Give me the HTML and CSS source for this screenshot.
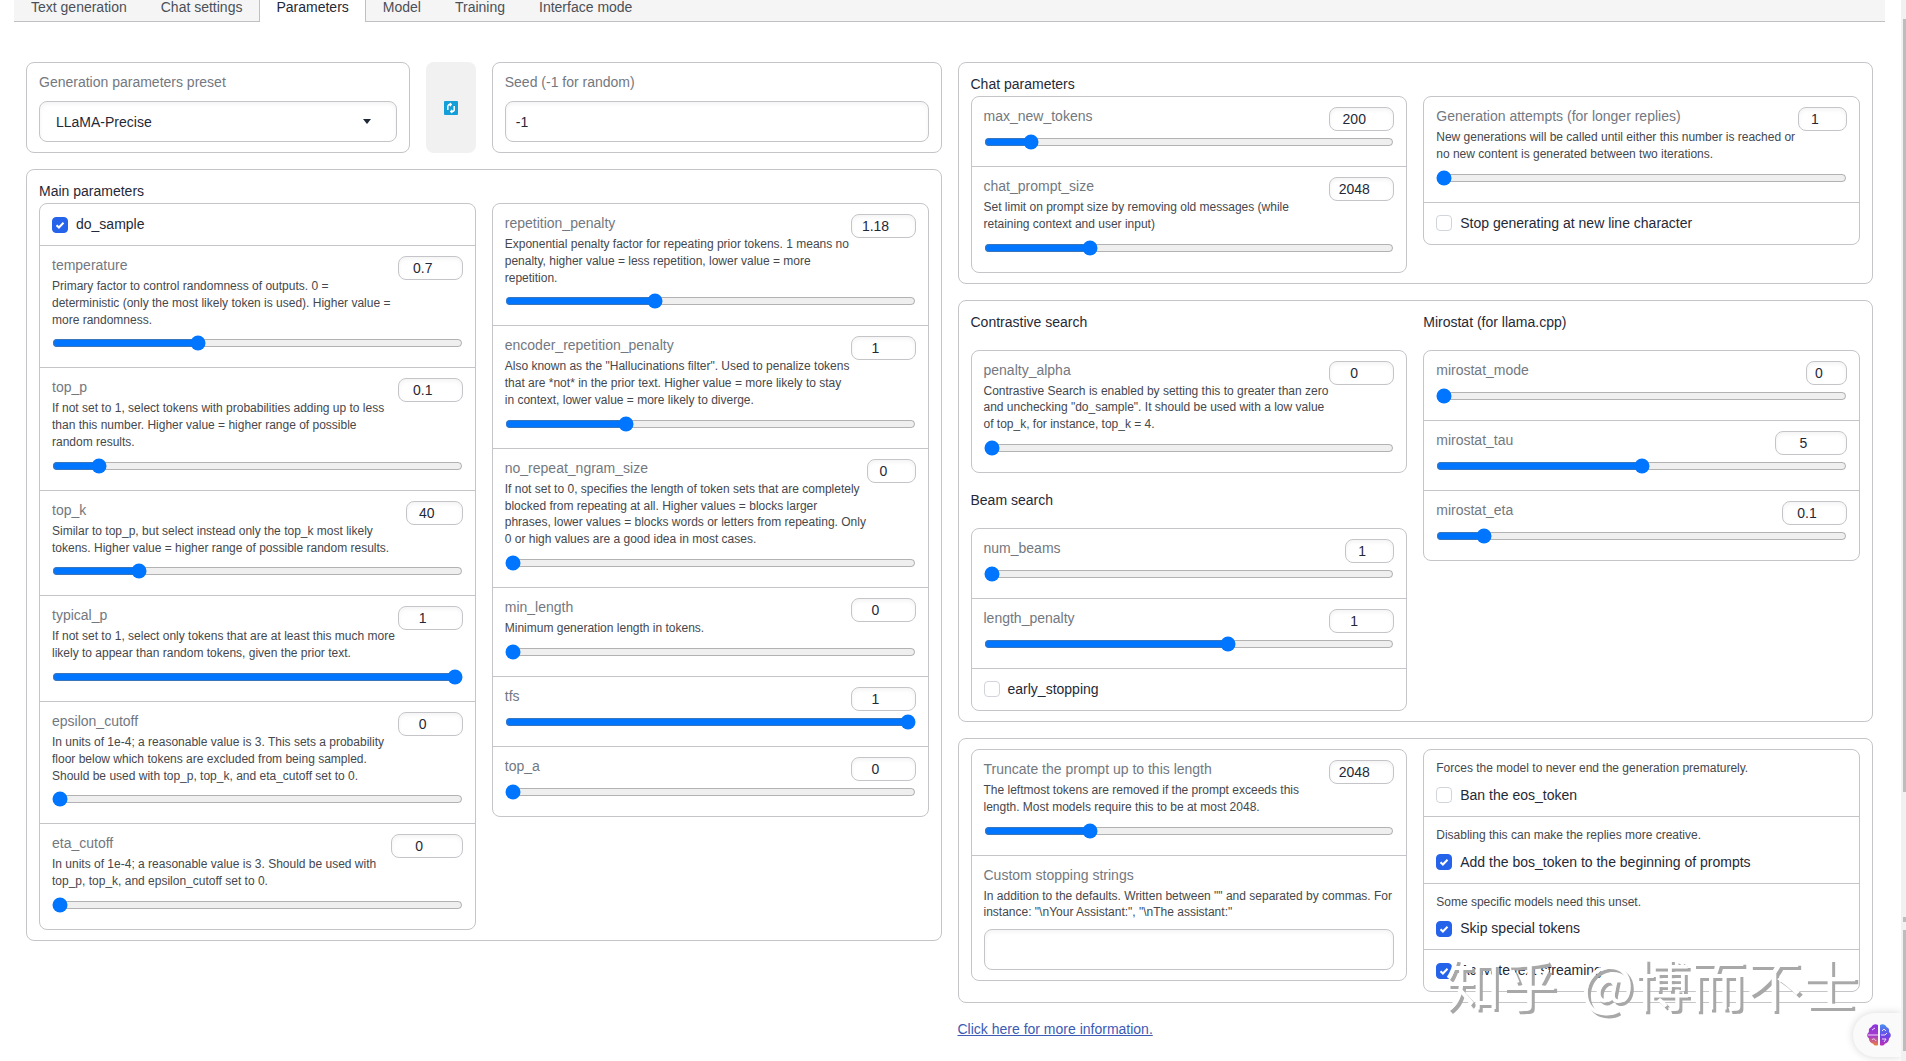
FILE: index.html
```html
<!DOCTYPE html>
<html lang="en">
<head>
<meta charset="utf-8">
<title>Parameters</title>
<link rel="stylesheet" href="styles.css">
</head>
<body>
<nav class="tabs">
  <button class="tab" type="button">Text generation</button>
  <button class="tab" type="button">Chat settings</button>
  <button class="tab selected" type="button">Parameters</button>
  <button class="tab" type="button">Model</button>
  <button class="tab" type="button">Training</button>
  <button class="tab" type="button">Interface mode</button>
</nav>

<main class="page">
  <div class="column">
    <div class="pair">
      <div class="preset-row">
        <div class="box block grow">
          <label class="label spaced" for="preset">Generation parameters preset</label>
          <div class="select-wrap">
            <select class="field select" id="preset"><option>LLaMA-Precise</option></select>
            <svg class="caret" width="8" height="5" viewBox="0 0 8 5" aria-hidden="true"><path d="M0 0h8L4 5z" fill="#1f2937"/></svg>
          </div>
        </div>
        <button class="refresh" type="button" aria-label="Refresh presets">
          <svg width="14" height="14" viewBox="0 0 14 14" aria-hidden="true">
            <rect width="14" height="14" rx="1" fill="#149fd8"/>
            <g transform="matrix(0 1 1 0 0 0)">
              <path d="M3.600 8V5.800a2 2 0 0 1 2-2H9M10.400 6v2.200a2 2 0 0 1-2 2H5" fill="none" stroke="#fff" stroke-width="1.500"/>
              <path d="M1.500 7L3.600 4.200 5.800 7zM12.500 7l-2.100 2.800L8.200 7z" fill="#fff"/>
            </g>
          </svg>
        </button>
      </div>
      <div class="box block">
        <label class="label spaced" for="seed">Seed (-1 for random)</label>
        <input class="field" id="seed" type="text" value="-1">
      </div>
    </div>

    <section class="box panel">
      <h2 class="heading">Main parameters</h2>
      <div class="pair">
        <div class="box group">
          <div class="block">
            <label class="check"><input type="checkbox" checked>do_sample</label>
          </div>
          <div class="block">
            <div class="head">
              <div class="text"><label class="label" for="temperature">temperature</label>
                <p class="info">Primary factor to control randomness of outputs. 0 = deterministic (only the most likely token is used). Higher value = more randomness.</p></div>
              <input class="number" id="temperature" type="number" step="any" value="0.7">
            </div>
            <input class="slider" type="range" aria-label="temperature" min="0.01" max="1.99" step="any" value="0.7">
          </div>
          <div class="block">
            <div class="head">
              <div class="text"><label class="label" for="top_p">top_p</label>
                <p class="info">If not set to 1, select tokens with probabilities adding up to less than this number. Higher value = higher range of possible random results.</p></div>
              <input class="number" id="top_p" type="number" step="any" value="0.1">
            </div>
            <input class="slider" type="range" aria-label="top_p" min="0" max="1" step="any" value="0.1">
          </div>
          <div class="block">
            <div class="head">
              <div class="text"><label class="label" for="top_k">top_k</label>
                <p class="info">Similar to top_p, but select instead only the top_k most likely tokens. Higher value = higher range of possible random results.</p></div>
              <input class="number digits-3" id="top_k" type="number" value="40">
            </div>
            <input class="slider" type="range" aria-label="top_k" min="0" max="200" value="40">
          </div>
          <div class="block">
            <div class="head">
              <div class="text"><label class="label" for="typical_p">typical_p</label>
                <p class="info">If not set to 1, select only tokens that are at least this much more likely to appear than random tokens, given the prior text.</p></div>
              <input class="number" id="typical_p" type="number" value="1">
            </div>
            <input class="slider" type="range" aria-label="typical_p" min="0" max="1" step="any" value="1">
          </div>
          <div class="block">
            <div class="head">
              <div class="text"><label class="label" for="epsilon_cutoff">epsilon_cutoff</label>
                <p class="info">In units of 1e-4; a reasonable value is 3. This sets a probability floor below which tokens are excluded from being sampled. Should be used with top_p, top_k, and eta_cutoff set to 0.</p></div>
              <input class="number" id="epsilon_cutoff" type="number" value="0">
            </div>
            <input class="slider" type="range" aria-label="epsilon_cutoff" min="0" max="9" value="0">
          </div>
          <div class="block">
            <div class="head">
              <div class="text"><label class="label" for="eta_cutoff">eta_cutoff</label>
                <p class="info">In units of 1e-4; a reasonable value is 3. Should be used with top_p, top_k, and epsilon_cutoff set to 0.</p></div>
              <input class="number digits-5" id="eta_cutoff" type="number" value="0">
            </div>
            <input class="slider" type="range" aria-label="eta_cutoff" min="0" max="20" value="0">
          </div>
        </div>

        <div class="box group">
          <div class="block">
            <div class="head">
              <div class="text"><label class="label" for="repetition_penalty">repetition_penalty</label>
                <p class="info">Exponential penalty factor for repeating prior tokens. 1 means no penalty, higher value = less repetition, lower value = more repetition.</p></div>
              <input class="number" id="repetition_penalty" type="number" step="any" value="1.18">
            </div>
            <input class="slider" type="range" aria-label="repetition_penalty" min="1" max="1.5" step="any" value="1.18">
          </div>
          <div class="block">
            <div class="head">
              <div class="text"><label class="label" for="encoder_penalty">encoder_repetition_penalty</label>
                <p class="info">Also known as the "Hallucinations filter". Used to penalize tokens that are *not* in the prior text. Higher value = more likely to stay in context, lower value = more likely to diverge.</p></div>
              <input class="number" id="encoder_penalty" type="number" value="1">
            </div>
            <input class="slider" type="range" aria-label="encoder_repetition_penalty" min="0.8" max="1.5" step="any" value="1">
          </div>
          <div class="block">
            <div class="head">
              <div class="text"><label class="label" for="no_repeat">no_repeat_ngram_size</label>
                <p class="info">If not set to 0, specifies the length of token sets that are completely blocked from repeating at all. Higher values = blocks larger phrases, lower values = blocks words or letters from repeating. Only 0 or high values are a good idea in most cases.</p></div>
              <input class="number digits-2" id="no_repeat" type="number" value="0">
            </div>
            <input class="slider" type="range" aria-label="no_repeat_ngram_size" min="0" max="20" value="0">
          </div>
          <div class="block">
            <div class="head">
              <div class="text"><label class="label" for="min_length">min_length</label>
                <p class="info">Minimum generation length in tokens.</p></div>
              <input class="number" id="min_length" type="number" value="0">
            </div>
            <input class="slider" type="range" aria-label="min_length" min="0" max="2000" value="0">
          </div>
          <div class="block">
            <div class="head">
              <div class="text"><label class="label" for="tfs">tfs</label></div>
              <input class="number" id="tfs" type="number" value="1">
            </div>
            <input class="slider" type="range" aria-label="tfs" min="0" max="1" step="any" value="1">
          </div>
          <div class="block">
            <div class="head">
              <div class="text"><label class="label" for="top_a">top_a</label></div>
              <input class="number" id="top_a" type="number" value="0">
            </div>
            <input class="slider" type="range" aria-label="top_a" min="0" max="1" step="any" value="0">
          </div>
        </div>
      </div>
    </section>
  </div>

  <div class="column">
    <section class="box panel">
      <h2 class="heading">Chat parameters</h2>
      <div class="pair">
        <div class="box group">
          <div class="block">
            <div class="head">
              <div class="text"><label class="label" for="max_new_tokens">max_new_tokens</label></div>
              <input class="number" id="max_new_tokens" type="number" value="200">
            </div>
            <input class="slider" type="range" aria-label="max_new_tokens" min="1" max="2000" value="200">
          </div>
          <div class="block">
            <div class="head">
              <div class="text"><label class="label" for="chat_prompt_size">chat_prompt_size</label>
                <p class="info">Set limit on prompt size by removing old messages (while retaining context and user input)</p></div>
              <input class="number" id="chat_prompt_size" type="number" value="2048">
            </div>
            <input class="slider" type="range" aria-label="chat_prompt_size" min="0" max="8192" value="2048">
          </div>
        </div>
        <div class="box group">
          <div class="block">
            <div class="head">
              <div class="text"><label class="label" for="attempts">Generation attempts (for longer replies)</label>
                <p class="info">New generations will be called until either this number is reached or no new content is generated between two iterations.</p></div>
              <input class="number digits-2" id="attempts" type="number" value="1">
            </div>
            <input class="slider" type="range" aria-label="Generation attempts" min="1" max="10" value="1">
          </div>
          <div class="block">
            <label class="check"><input type="checkbox">Stop generating at new line character</label>
          </div>
        </div>
      </div>
    </section>

    <section class="box panel">
      <div class="pair">
        <div class="stack">
          <h2 class="heading">Contrastive search</h2>
          <div class="box group">
            <div class="block">
              <div class="head">
                <div class="text"><label class="label" for="penalty_alpha">penalty_alpha</label>
                  <p class="info">Contrastive Search is enabled by setting this to greater than zero and unchecking "do_sample". It should be used with a low value of top_k, for instance, top_k = 4.</p></div>
                <input class="number" id="penalty_alpha" type="number" value="0">
              </div>
              <input class="slider" type="range" aria-label="penalty_alpha" min="0" max="5" value="0">
            </div>
          </div>
          <h2 class="heading">Beam search</h2>
          <div class="box group">
            <div class="block">
              <div class="head">
                <div class="text"><label class="label" for="num_beams">num_beams</label></div>
                <input class="number digits-2" id="num_beams" type="number" value="1">
              </div>
              <input class="slider" type="range" aria-label="num_beams" min="1" max="20" value="1">
            </div>
            <div class="block">
              <div class="head">
                <div class="text"><label class="label" for="length_penalty">length_penalty</label></div>
                <input class="number" id="length_penalty" type="number" value="1">
              </div>
              <input class="slider" type="range" aria-label="length_penalty" min="-5" max="5" value="1">
            </div>
            <div class="block">
              <label class="check"><input type="checkbox">early_stopping</label>
            </div>
          </div>
        </div>
        <div class="stack">
          <h2 class="heading">Mirostat (for llama.cpp)</h2>
          <div class="box group">
            <div class="block">
              <div class="head">
                <div class="text"><label class="label" for="mirostat_mode">mirostat_mode</label></div>
                <input class="number digits-1" id="mirostat_mode" type="number" value="0">
              </div>
              <input class="slider" type="range" aria-label="mirostat_mode" min="0" max="2" value="0">
            </div>
            <div class="block">
              <div class="head">
                <div class="text"><label class="label" for="mirostat_tau">mirostat_tau</label></div>
                <input class="number digits-5" id="mirostat_tau" type="number" value="5">
              </div>
              <input class="slider" type="range" aria-label="mirostat_tau" min="0" max="10" value="5">
            </div>
            <div class="block">
              <div class="head">
                <div class="text"><label class="label" for="mirostat_eta">mirostat_eta</label></div>
                <input class="number" id="mirostat_eta" type="number" step="any" value="0.1">
              </div>
              <input class="slider" type="range" aria-label="mirostat_eta" min="0" max="1" step="any" value="0.1">
            </div>
          </div>
        </div>
      </div>
    </section>

    <section class="box panel">
      <div class="pair">
        <div class="box group">
          <div class="block">
            <div class="head">
              <div class="text"><label class="label" for="truncate">Truncate the prompt up to this length</label>
                <p class="info">The leftmost tokens are removed if the prompt exceeds this length. Most models require this to be at most 2048.</p></div>
              <input class="number" id="truncate" type="number" value="2048">
            </div>
            <input class="slider" type="range" aria-label="Truncate the prompt up to this length" min="0" max="8192" value="2048">
          </div>
          <div class="block">
            <label class="label" for="stopping">Custom stopping strings</label>
            <p class="info above-field">In addition to the defaults. Written between "" and separated by commas. For instance: "\nYour Assistant:", "\nThe assistant:"</p>
            <input class="field" id="stopping" type="text">
          </div>
        </div>
        <div class="box group">
          <div class="block">
            <p class="info above-field">Forces the model to never end the generation prematurely.</p>
            <label class="check"><input type="checkbox">Ban the eos_token</label>
          </div>
          <div class="block">
            <p class="info above-field">Disabling this can make the replies more creative.</p>
            <label class="check"><input type="checkbox" checked>Add the bos_token to the beginning of prompts</label>
          </div>
          <div class="block">
            <p class="info above-field">Some specific models need this unset.</p>
            <label class="check"><input type="checkbox" checked>Skip special tokens</label>
          </div>
          <div class="block">
            <label class="check"><input type="checkbox" checked>Activate text streaming</label>
          </div>
        </div>
      </div>
    </section>
    <a class="more" href="#">Click here for more information.</a>
  </div>
</main>

<div class="watermark"><span>知乎</span><span>@博而不士</span></div>

<button class="assistant" type="button" aria-label="Open assistant">
  <svg width="24" height="22" viewBox="0 0 24 22" aria-hidden="true">
    <defs>
      <linearGradient id="left" x1="0" y1="0" x2="0" y2="1"><stop offset="0" stop-color="#8b35e0"/><stop offset=".55" stop-color="#a63acb"/><stop offset="1" stop-color="#f0803c"/></linearGradient>
      <linearGradient id="right" x1="0" y1="0" x2="0" y2="1"><stop offset="0" stop-color="#4a90f0"/><stop offset=".55" stop-color="#6a45e8"/><stop offset="1" stop-color="#c02fb4"/></linearGradient>
    </defs>
    <path d="M11 1C8-1 5 1 4.500 3 2 4 1.500 6 2 8-.5 10-.2 13 2 14.500 2 18 4.500 19.500 6 19.500 7 22 10 22 11 21z" fill="url(#left)"/>
    <path d="M13 1c3-2 6 0 6.500 2 2.500 1 3 3 2.500 5 2.500 2 2.200 5 0 6.500 0 3.500-2.500 5-4 5-1 2.500-4 2.500-5 1.500z" fill="url(#right)"/>
    <path d="M1 11h10M5 6l3-2M5 16c1-2 3-1 4 1M15 7l2-2 2 2M14 11h4l2-2M15 15h4l-2 3" fill="none" stroke="#f3dcfa"/>
  </svg>
</button>
<div class="scroll-rail" aria-hidden="true"><i class="thumb long"></i><i class="thumb dot"></i><i class="thumb short"></i></div>
</body>
</html>
```
FILE: styles.css
```css
* { box-sizing: border-box; }

body {
  margin: 0;
  background: #fff;
  color: #1f2937;
  font: 14px/20px "Liberation Sans", Arial, sans-serif;
}

button, input, select { font: inherit; color: inherit; }
p, h2 { margin: 0; }

/* Tab bar */
.tabs {
  display: flex;
  height: 22px;
  margin: 0 21px 0 14px;
  background: #f5f5f5;
  box-shadow: inset 0 -1px #c0c0c4;
}
.tab {
  padding: 0 16px 8px;
  border: 0 solid transparent;
  border-width: 0 1px;
  background: none;
  color: #4b5058;
  line-height: 14px;
}
.tab.selected {
  background: #fff;
  border-color: #c0c0c4;
  color: #1f2937;
}

/* Page grid */
.page {
  display: grid;
  grid-template-columns: 1fr 1fr;
  gap: 16px;
  align-items: start;
  padding: 40px 33px 16px 26px;
}
.column, .stack {
  display: flex;
  flex-direction: column;
  gap: 16px;
  min-width: 0;
}
.pair {
  display: grid;
  grid-template-columns: minmax(0, 1fr) minmax(0, 1fr);
  gap: 16px;
  align-items: start;
}
.preset-row { display: flex; gap: 16px; align-self: stretch; }
.grow { flex: 1; }

.box {
  border: 1px solid #c5c5c9;
  border-radius: 8px;
  background: #fff;
}
.panel { padding: 10px 12px; }
.heading {
  font-size: 14px;
  font-weight: 400;
  line-height: 23px;
}
.block { padding: 10px 12px; }
.group .block + .block { border-top: 1px solid #c5c5c9; }

/* Labels and fields */
.label {
  display: block;
  color: #73787f;
  line-height: 18px;
}
.spaced { margin-bottom: 10px; }
.info {
  color: #45484d;
  font-size: 12px;
  line-height: 1.4;
}
.label + .info { margin-top: 4px; }
.above-field { margin-bottom: 8px; }
.field {
  display: block;
  width: 100%;
  height: 41px;
  padding: 0 10px;
  border: 1px solid #c5c5c9;
  border-radius: 8px;
  background: #fff;
  box-shadow: inset 0 2px 4px rgba(0, 0, 0, .05);
}
.select-wrap { position: relative; }
.select { appearance: none; padding: 0 16px; }
.caret {
  position: absolute;
  top: 18px;
  right: 26px;
  pointer-events: none;
}
.refresh {
  width: 50px;
  padding: 0;
  border: 0;
  border-radius: 8px;
  background: #f1f1f1;
}
.refresh svg { display: block; margin: 0 auto; }

/* Slider blocks */
.head {
  display: flex;
  align-items: flex-start;
  justify-content: space-between;
  margin-bottom: 3px;
}
.text { flex: 1; min-width: 0; }
.text .info { margin-bottom: 4px; }
.number {
  flex: none;
  width: 65px;
  height: 24px;
  padding: 0 8px;
  border: 1px solid #c5c5c9;
  border-radius: 8px;
  background: #fff;
  box-shadow: inset 0 2px 4px rgba(0, 0, 0, .05);
  text-align: center;
}
.digits-1 { width: 41px; }
.digits-2 { width: 49px; }
.digits-3 { width: 57px; }
.digits-5 { width: 72px; }
.slider {
  display: block;
  width: 100%;
  height: 16px;
  margin: 0 0 6px;
}

/* Tick boxes */
.check {
  display: flex;
  align-items: center;
  gap: 8px;
  line-height: 21px;
}
.check input {
  appearance: none;
  width: 16px;
  height: 16px;
  margin: 0;
  border: 1px solid #d1d5db;
  border-radius: 4px;
  background: #fff;
}
.check input:checked {
  border-color: #2563eb;
  background: #2563eb url("data:image/svg+xml,%3Csvg xmlns='http://www.w3.org/2000/svg' viewBox='0 0 16 16'%3E%3Cpath d='M4.500 8.200l2.400 2.300 4.600-4.800' fill='none' stroke='white' stroke-width='2'/%3E%3C/svg%3E") center / 16px;
}

.more {
  align-self: flex-start;
  color: #3b5bb5;
}

/* Overlays */
.watermark {
  position: fixed;
  right: 48px;
  bottom: 43px;
  display: flex;
  gap: 24px;
  color: #fff;
  font: 56px/72px "Noto Sans CJK SC", sans-serif;
  text-shadow: 3px 3px 0 #a8a8a8;
  pointer-events: none;
}
.assistant {
  position: fixed;
  right: 5px;
  bottom: 4px;
  width: 48px;
  height: 44px;
  padding: 0 0 0 4px;
  border: 0;
  border-radius: 22px 0 0 22px;
  background: #fafafa;
  box-shadow: 0 0 8px rgba(0, 0, 0, .16);
}
.assistant svg { display: block; margin: 0 auto; }
.scroll-rail {
  position: fixed;
  inset: 0 0 0 auto;
  width: 5px;
  background: #f1f1f1;
}
.thumb {
  position: absolute;
  right: 0;
  width: 3px;
  background: #bdbdbd;
}
.long { top: 19px; height: 773px; }
.dot { top: 917px; height: 5px; }
.short { top: 930px; height: 121px; }
```
